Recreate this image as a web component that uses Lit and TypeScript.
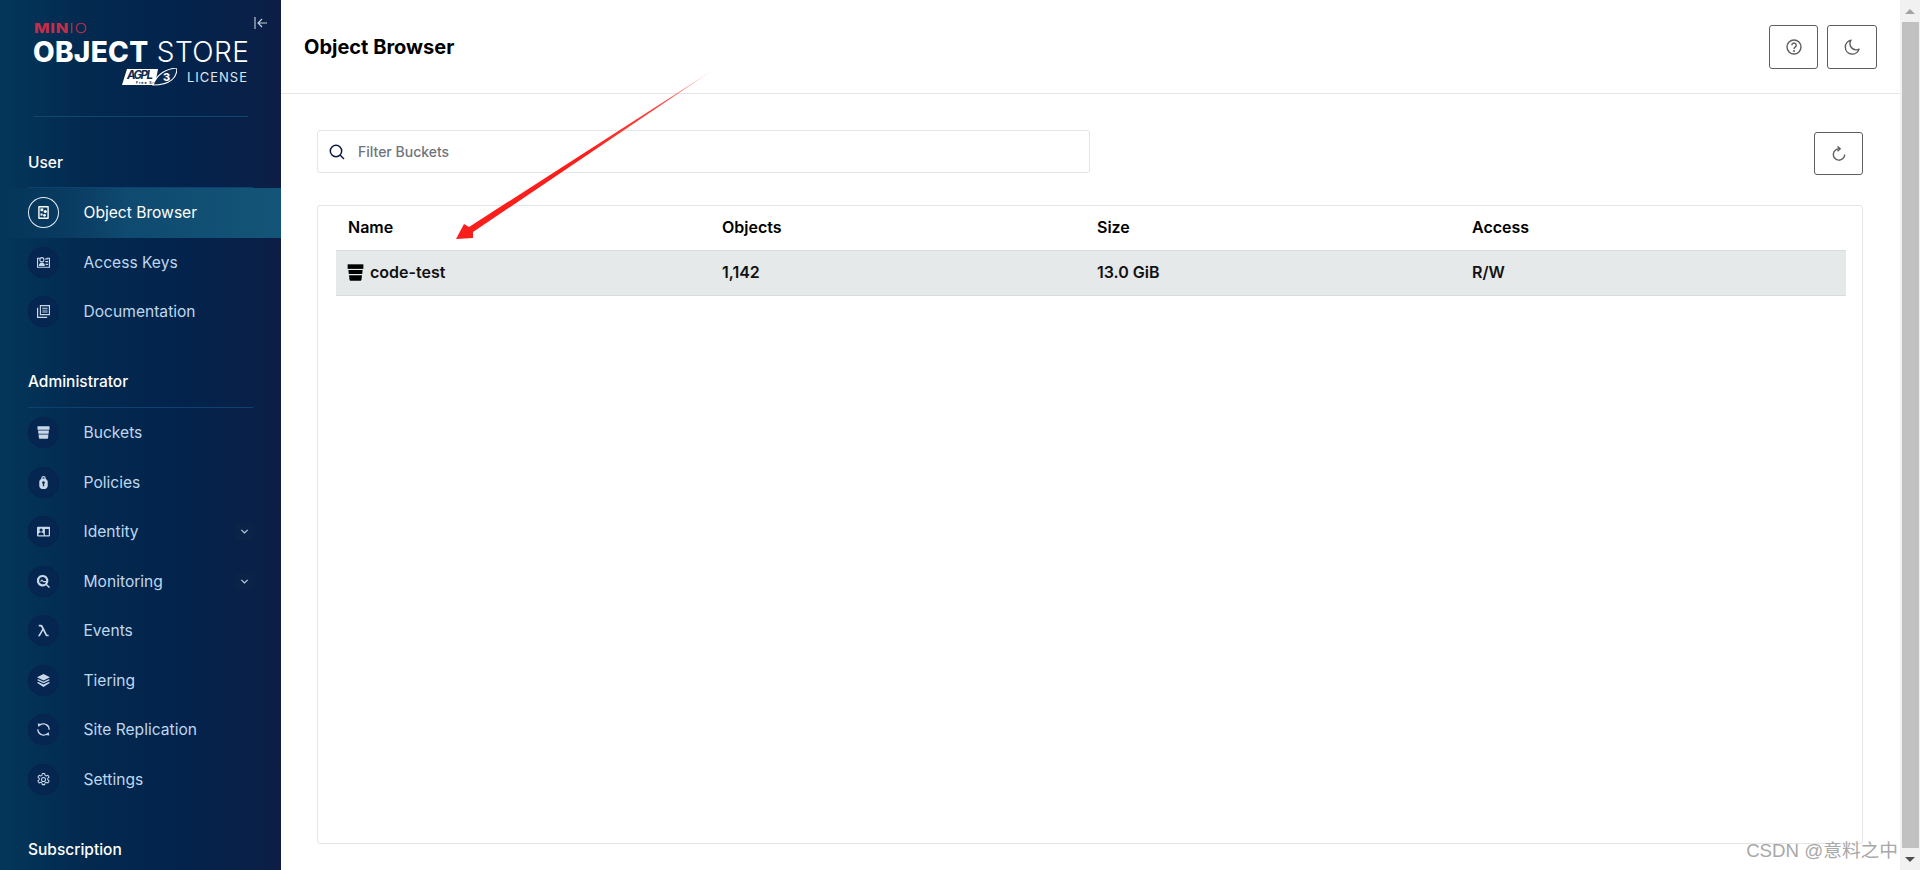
import { LitElement, html, css, svg } from "lit";
import { customElement } from "lit/decorators.js";

const I: Record<string, unknown> = {
  browser: svg`<path fill-rule="evenodd" d="M2.500 0h11a1 1 0 0 1 1 1v14a1 1 0 0 1-1 1h-11a1 1 0 0 1-1-1V1a1 1 0 0 1 1-1zm.7 1.700v12.600h9.600V1.700z"/><rect x="4.300" y="3" width="3.400" height="3.400"/><circle cx="10.200" cy="6.800" r="1.900"/><rect x="4.300" y="9.200" width="2.600" height="2.600"/><circle cx="9.300" cy="11.400" r="1.700"/>`,
  keys: svg`<path fill-rule="evenodd" d="M0 2h4.500v1.400H1.400v9.800h13.200V3.400h-3.100V2H16v12.600H0z"/><circle cx="6" cy="4.500" r="2.500" fill="none" stroke="currentColor" stroke-width="1.300"/><path d="M2.300 12.400c0-2.800 1.400-4.400 3.700-4.400s3.700 1.600 3.700 4.400z"/><path d="M9.800 3h3.800v1.400H9.800zM10.200 6.300h3.400v1.400h-3.400zM10.600 9.600h3v1.400h-3z"/>`,
  docs: svg`<path fill-rule="evenodd" d="M3.500 0H16v12.500H3.500zm1.400 1.400v9.700h9.700V1.400z"/><path d="M6.500 3.300h6.500v1.200H6.500zM6.500 5.700h6.500v1.200H6.500zM6.500 8.100h6.500v1.200H6.500z"/><path d="M0 3.500h1.500v11h11V16H0z"/>`,
  bucket: svg`<path d="M.6 .3h14.800v4.300H.6z"/><path d="M1.300 5.600h13.400l-.4 3.900H1.700z"/><path d="M1.900 10.500h12.200l-.5 4.400c-.1.500-.4.800-.9.800H3.300c-.5 0-.8-.3-.9-.8z"/>`,
  policy: svg`<path fill-rule="evenodd" d="M8 0a2.800 2.800 0 0 1 2.800 2.800v.8c1.500.8 2.400 1.900 2.400 3.700v4.800c0 2.200-1.600 3.900-3.800 3.900H6.600c-2.200 0-3.800-1.700-3.800-3.900V7.300c0-1.800.9-2.900 2.400-3.700v-.8A2.800 2.800 0 0 1 8 0zm0 1.400c-.8 0-1.400.6-1.400 1.400v.3a7 7 0 0 1 2.800 0v-.3c0-.8-.6-1.400-1.400-1.400zM8 6.400a1.700 1.700 0 0 0-.8 3.200v3h1.600v-3A1.700 1.700 0 0 0 8 6.400z"/>`,
  identity: svg`<path fill-rule="evenodd" d="M1 2h14a1 1 0 0 1 1 1v10a1 1 0 0 1-1 1H1a1 1 0 0 1-1-1V3a1 1 0 0 1 1-1zM5 4.200a2 2 0 1 0 0 4 2 2 0 0 0 0-4zM1.600 12.600h6.800c0-2.500-1.400-3.800-3.400-3.800s-3.400 1.300-3.400 3.800zM9.700 5v7.600h4.800V5z"/>`,
  monitor: svg`<path fill-rule="evenodd" d="M7 0a7 7 0 0 1 5.400 11.400l3.600 3.400-1.400 1.200-3.500-3.500A7 7 0 1 1 7 0zm0 2.600a4.400 4.400 0 1 0 4 6.200H7.300L6.100 7.200l-.9 1.200H4V7h.5l1.500-1.900L7.900 7.400h3.400A4.400 4.400 0 0 0 7 2.600z"/>`,
  lambda: svg`<path d="M2.200 1h2.600c1.100 0 1.800.5 2.300 1.500l5 10c.3.500.6.800 1.300.8h.9V15h-1.800c-1.100 0-1.800-.5-2.300-1.500L7.500 8.100 3.500 15H1.200l5.200-9-1-2c-.3-.6-.6-.9-1.300-.9H2.200z"/>`,
  tier: svg`<path d="M8 0l8 4-8 4-8-4z"/><path d="M1.700 6.400L8 9.500l6.300-3.100 1.700.9-8 4-8-4z"/><path d="M1.700 9.900L8 13l6.300-3.100 1.700.9L8 16 0 10.800z"/>`,
  replicate: svg`<g fill="none" stroke="currentColor" stroke-width="1.500"><path d="M13.600 4.200A6.800 6.800 0 0 0 3.500 2.600"/><path d="M1 7.800a7 7 0 0 0 3.600 6.300"/><path d="M2.400 11.800a6.800 6.800 0 0 0 10.100 1.600"/><path d="M15 8.200a7 7 0 0 0-3.600-6.300"/></g><path d="M.8 .6l4.800.6-3.800 3.800zM15.200 15.400l-4.800-.6 3.800-3.800z"/>`,
  gear: svg`<g fill="none" stroke="currentColor" stroke-width="1.250"><circle cx="8" cy="8" r="2.500"/><path d="M6.500.7h3l.4 2.200 1.400.7 2.100-.9 1.500 2.500-1.700 1.500v1.600l1.700 1.500-1.500 2.500-2.100-.9-1.400.7-.4 2.200h-3l-.4-2.200-1.400-.7-2.100.9-1.500-2.500 1.700-1.500V6.700L1.100 5.200l1.500-2.500 2.100.9 1.400-.7z" stroke-linejoin="round"/></g>`,
};

type Item = { label: string; icon: string; active?: boolean; chevron?: boolean };
const USER: Item[] = [
  { label: "Object Browser", icon: "browser", active: true },
  { label: "Access Keys", icon: "keys" },
  { label: "Documentation", icon: "docs" },
];
const ADMIN: Item[] = [
  { label: "Buckets", icon: "bucket" },
  { label: "Policies", icon: "policy" },
  { label: "Identity", icon: "identity", chevron: true },
  { label: "Monitoring", icon: "monitor", chevron: true },
  { label: "Events", icon: "lambda" },
  { label: "Tiering", icon: "tier" },
  { label: "Site Replication", icon: "replicate" },
  { label: "Settings", icon: "gear" },
];

@customElement("app-root")
export class AppRoot extends LitElement {
  static styles = css`
    :host { display: flex; height: 870px; overflow: hidden; position: relative; font-family: Inter, "Liberation Sans", sans-serif; background: #fff; color: #07193e; }
    aside { width: 281px; flex: none; height: 870px; overflow: hidden; color: #fff; background: linear-gradient(90deg, #03375a 0%, #03294f 30%, #03234c 65%, #0a2048 92%, #0d1d44 100%); }
    .brand { height: 116px; margin: 0 33px 0 34px; border-bottom: 1px solid #12466f; position: relative; display: flex; flex-direction: column; align-items: flex-start; box-sizing: content-box; }
    .minio { font-size: 12.500px; font-weight: 800; letter-spacing: .6px; color: #c72c48; line-height: 12px; margin-top: 23px; transform: scaleX(1.320); transform-origin: left; }
    .minio span { font-weight: 300; }
    .store { font-size: 28px; line-height: 28px; margin-top: 3px; margin-left: -1px; letter-spacing: .3px; white-space: nowrap; font-weight: 800; }
    .store span { font-weight: 300; letter-spacing: .45px; }
    .lic { align-self: flex-end; display: flex; align-items: center; gap: 10px; margin-top: 2px; font-size: 13px; letter-spacing: 1px; line-height: 18px; font-weight: 400; color: #dfe6ee; }
    .lic svg { display: block; }
    .collapse { position: absolute; right: -21px; top: 15px; width: 16px; height: 16px; color: #c8d2dd; }
    h3 { font-size: 15.500px; font-weight: 500; margin: 0 28px; line-height: 18px; color: #fff; }
    h3.user { margin-top: 37px; padding-bottom: 15px; border-bottom: 1px solid #0d4270; }
    h3.admin { margin-top: 36.500px; padding-bottom: 16px; border-bottom: 1px solid #0d4270; }
    h3.sub { margin-top: 36.500px; }
    nav { display: flex; flex-direction: column; }
    .item { height: 49.500px; display: flex; align-items: center; padding-left: 28px; padding-right: 28px; font-size: 15.600px; color: #bfd7ee; box-sizing: border-box; }
    .item.active { color: #fff; background: linear-gradient(90deg, rgba(19,80,114,0) 0%, #0f4a70 45%, #135577 100%); }
    .circle { width: 31px; height: 31px; border-radius: 50%; background: #052651; box-shadow: inset 0 0 0 1px #08244d; display: flex; align-items: center; justify-content: center; margin-right: 24.500px; flex: none; color: #c9d8e8; }
    .active .circle { background: transparent; box-shadow: inset 0 0 0 1px #e4edf4; color: #fff; }
    .circle svg { width: 13px; height: 13px; fill: currentColor; display: block; }
    .chev { margin-left: auto; width: 17px; height: 17px; border-radius: 2px; background: #0a2347; display: flex; align-items: center; justify-content: center; }
    .chev svg { width: 9px; height: 9px; fill: none; stroke: #bfd0e2; stroke-width: 1.300; display: block; }

    main { flex: 1; min-width: 0; display: flex; flex-direction: column; }
    header { height: 93px; flex: none; border-bottom: 1px solid #e5e5e5; display: flex; align-items: center; padding: 0 23px 0 23px; box-sizing: content-box; }
    h1 { font-size: 20px; font-weight: 700; margin: 0; color: #000; flex: 1; line-height: 22px; }
    .btn { box-sizing: border-box; border: 1px solid #5e5e5e; border-radius: 3px; background: #fff; display: flex; align-items: center; justify-content: center; color: #5e5e5e; padding: 0; flex: none; }
    .btn svg { width: 16px; height: 16px; fill: none; stroke: currentColor; stroke-width: 1.400; display: block; }
    .hbtns { display: flex; gap: 9px; }
    .hbtns .btn { width: 49px; height: 44px; }
    .hbtns .btn.wide { width: 50px; }
    .content { flex: 1; min-height: 0; padding: 36px 37px 26px 36px; display: flex; flex-direction: column; }
    .toolbar { display: flex; justify-content: space-between; align-items: flex-start; height: 75px; flex: none; }
    .search { width: 773px; height: 43px; box-sizing: border-box; border: 1px solid #e5e5e5; border-radius: 3px; display: flex; align-items: center; padding-left: 11px; gap: 13px; font-size: 14px; font-weight: 500; color: #6f747c; }
    .search svg { width: 16px; height: 16px; fill: none; stroke: #07193e; stroke-width: 1.500; flex: none; }
    .refresh { width: 49px; height: 43px; margin-top: 2px; }
    .table { flex: 1; min-height: 0; border: 1px solid #e5e5e5; border-radius: 3px; padding: 0 16px 0 18px; }
    .cols { display: grid; grid-template-columns: 374px 375px 375px 1fr; align-items: center; padding-left: 12px; }
    .head { height: 44px; font-size: 16px; font-weight: 600; color: #000; padding-bottom: 3px; box-sizing: border-box; }
    .row { height: 46px; background: #e6e9ea; font-size: 16px; font-weight: 600; color: #111; border-top: 1px solid #d9dddf; border-bottom: 1px solid #d9dddf; box-sizing: border-box; padding-bottom: 2px; }
    .name { display: flex; align-items: center; gap: 6px; margin-left: -1px; }
    .name svg { width: 17px; height: 17px; fill: #000; flex: none; }

    .scroll { width: 20px; flex: none; background: #f1f1f1; display: flex; flex-direction: column; align-items: center; }
    .arrow-btn { height: 22px; flex: none; display: flex; align-items: center; justify-content: center; width: 100%; }
    .tri-up { width: 0; height: 0; border-left: 5px solid transparent; border-right: 5px solid transparent; border-bottom: 5px solid #a3a3a3; }
    .tri-down { width: 0; height: 0; border-left: 5px solid transparent; border-right: 5px solid transparent; border-top: 5px solid #505050; }
    .thumb { flex: 1; width: 17px; background: #c1c1c1; }
    .overlay { position: absolute; left: 0; top: 0; pointer-events: none; }
    .mark { position: absolute; right: 22px; bottom: 8px; font-size: 18.700px; line-height: 22px; color: #a8a8a8; font-family: "Liberation Sans", "Noto Sans CJK SC", sans-serif; }
  `;

  private nav(items: Item[]) {
    return html`<nav>${items.map(
      (i) => html`<div class="item ${i.active ? "active" : ""}">
        <span class="circle"><svg viewBox="0 0 16 16">${I[i.icon]}</svg></span>${i.label}
        ${i.chevron ? html`<span class="chev"><svg viewBox="0 0 10 10"><path d="M1.500 3.200L5 6.700l3.500-3.500"/></svg></span>` : ""}
      </div>`
    )}</nav>`;
  }

  render() {
    return html`
      <aside>
        <div class="brand">
          <div class="minio">MIN<span>IO</span></div>
          <div class="store">OBJECT<span> STORE</span></div>
          <div class="lic">
            <svg width="55" height="18" viewBox="0 0 55 18">
              <path d="M5 1h31l-3 16H0z" fill="#fff"/>
              <text x="5" y="11" font-size="11.500" font-style="italic" font-weight="700" fill="#0b2a50" font-family="Inter" textLength="27">AGPL</text>
              <text x="14" y="15.500" font-size="3.500" font-weight="700" fill="#0b2a50" font-family="Inter">Free Software</text>
              <path d="M31 17C35 6 43 1 55 0c0 9-6 17-24 17z" fill="#0b2a50" stroke="#fff" stroke-width="1.200"/>
              <text x="41" y="12.500" font-size="11" font-weight="800" fill="#fff" font-family="Inter">3</text>
            </svg>
            <span>LICENSE</span>
          </div>
          <svg class="collapse" viewBox="0 0 16 16" fill="none" stroke="currentColor" stroke-width="1.100"><path d="M2 2v12M14 8H5M9 4L5 8l4 4"/></svg>
        </div>
        <h3 class="user">User</h3>
        ${this.nav(USER)}
        <h3 class="admin">Administrator</h3>
        ${this.nav(ADMIN)}
        <h3 class="sub">Subscription</h3>
      </aside>
      <main>
        <header>
          <h1>Object Browser</h1>
          <div class="hbtns">
            <button class="btn"><svg viewBox="0 0 16 16"><circle cx="8" cy="8" r="7"/><path d="M5.800 6.200a2.200 2.200 0 1 1 3.400 1.900c-.8.500-1.200.9-1.200 1.900"/><circle cx="8" cy="12" r=".4"/></svg></button>
            <button class="btn wide"><svg viewBox="0 0 16 16"><path d="M7 1.200a7 7 0 1 0 8 9 6.500 6.500 0 0 1-3.200.7A6.300 6.300 0 0 1 7 1.200z" stroke-linejoin="round"/></svg></button>
          </div>
        </header>
        <div class="content">
          <div class="toolbar">
            <div class="search"><svg viewBox="0 0 16 16"><circle cx="7" cy="7" r="5.700"/><path d="M11 11l4 4"/></svg>Filter Buckets</div>
            <button class="btn refresh"><svg viewBox="0 0 16 16"><path d="M8.500 2.800A5.700 5.700 0 1 0 13.700 8.500"/><path d="M6.500.5L9.200 2.800 6.500 5.300" /></svg></button>
          </div>
          <div class="table">
            <div class="cols head"><span>Name</span><span>Objects</span><span>Size</span><span>Access</span></div>
            <div class="cols row">
              <span class="name"><svg viewBox="0 0 16 16">${I.bucket}</svg>code-test</span>
              <span>1,142</span><span>13.0 GiB</span><span>R/W</span>
            </div>
          </div>
        </div>
      </main>
      <div class="scroll">
        <div class="arrow-btn"><i class="tri-up"></i></div>
        <div class="thumb"></div>
        <div class="arrow-btn"><i class="tri-down"></i></div>
      </div>
      <svg class="overlay" width="1920" height="870" viewBox="0 0 1920 870">
        <defs><linearGradient id="fade" x1="713" y1="70" x2="456" y2="240" gradientUnits="userSpaceOnUse">
          <stop offset="0" stop-color="#ffd0d0"/><stop offset=".2" stop-color="#fb4a45"/><stop offset=".5" stop-color="#fb1f1c"/><stop offset="1" stop-color="#fb1f1c"/>
        </linearGradient></defs>
        <polygon fill="url(#fade)" points="713,70 473,232 473,238 456,239 464,224 469,227"/>
      </svg>
      <div class="mark">CSDN @意料之中</div>
    `;
  }
}
